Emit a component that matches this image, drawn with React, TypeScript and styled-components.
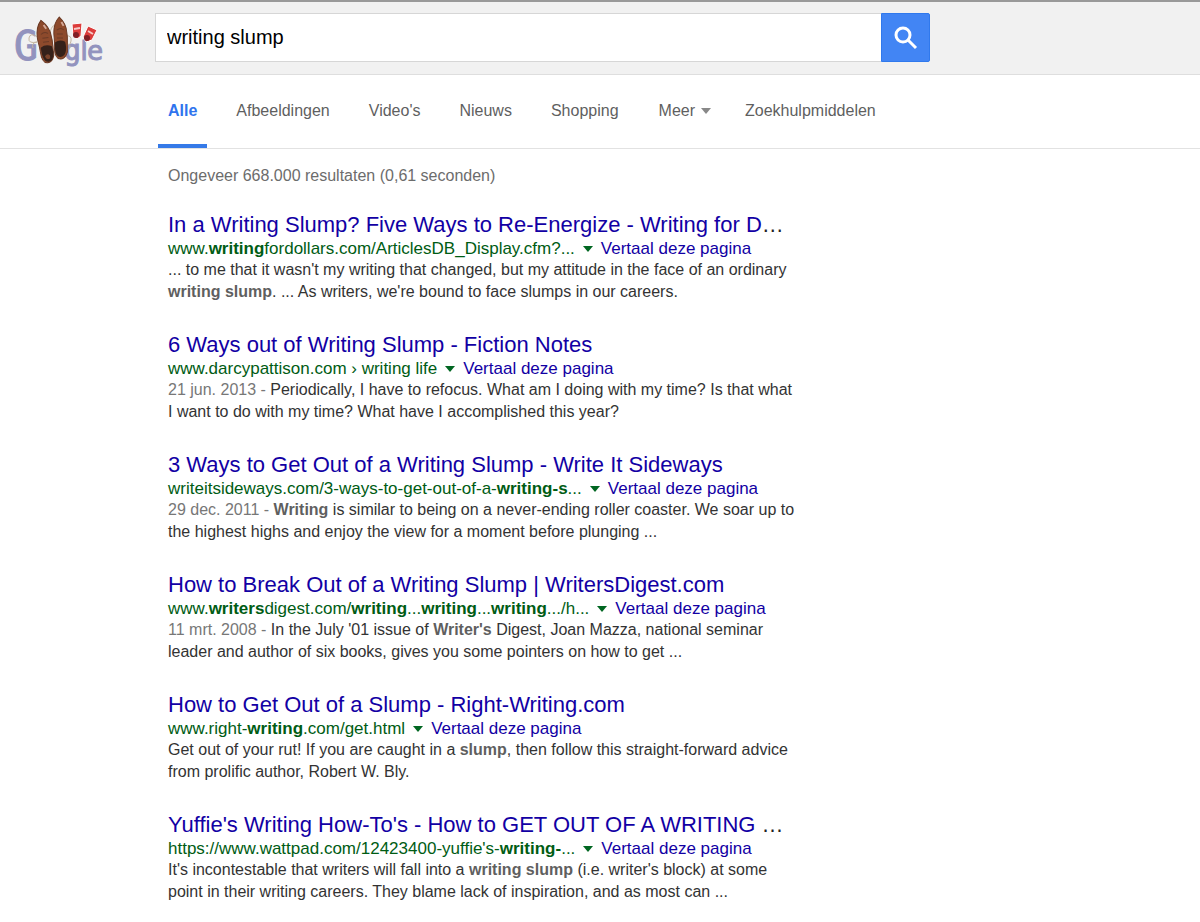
import React from 'react';
import styled, { createGlobalStyle } from 'styled-components';

const GlobalStyle = createGlobalStyle`
  * { box-sizing: border-box; }
  body {
    margin: 0;
    background: #fff;
    color: #333;
    font-family: "Liberation Sans", Arial, sans-serif;
    font-size: 16px;
    line-height: 22px;
  }
  a { text-decoration: none; }
`;

const Header = styled.header`
  display: flex;
  align-items: center;
  height: 75px;
  padding-bottom: 1px;
  background: #f1f1f1;
  border-top: 2px solid #999;
  border-bottom: 1px solid #dedede;
`;

const LogoLink = styled.a`
  flex: none;
  width: 155px;
  padding-left: 14px;
  svg { display: block; }
`;

const SearchForm = styled.form`
  display: flex;
  flex: 0 1 775px;
  height: 49px;
`;

const SearchInput = styled.input`
  flex: 1;
  min-width: 0;
  padding: 0 11px 1px;
  border: 1px solid #d6d6d6;
  border-right: 0;
  border-radius: 0;
  background: #fff;
  color: #000;
  font: 20px "Liberation Sans", Arial, sans-serif;
  outline: none;
`;

const SearchButton = styled.button`
  display: flex;
  align-items: center;
  justify-content: center;
  width: 49px;
  padding: 0;
  border: 1px solid #3079ed;
  border-radius: 0 2px 2px 0;
  background: #4285f4;
`;

const Nav = styled.nav`
  display: flex;
  gap: 20px;
  padding-left: 158px;
  border-bottom: 1px solid #e2e2e2;
`;

const Tab = styled.a<{ $active?: boolean; $menu?: boolean }>`
  display: flex;
  align-items: center;
  gap: 6px;
  height: 73px;
  padding: 0 ${(p) => (p.$menu ? '5px' : '10px')} 0 ${(p) => (p.$menu || p.$active ? '10px' : '9px')};
  border-top: 2px solid transparent;
  border-bottom: 4px solid ${(p) => (p.$active ? '#357ae8' : 'transparent')};
  color: ${(p) => (p.$active ? '#2f74ee' : '#5f5f5f')};
  font-weight: ${(p) => (p.$active ? 700 : 400)};
  white-space: nowrap;
`;

const Caret = styled.span<{ $color: string }>`
  display: inline-block;
  flex: none;
  border: 5px solid transparent;
  border-top: 6px solid ${(p) => p.$color};
  border-bottom: 0;
`;

const Main = styled.main`
  box-sizing: content-box;
  max-width: 630px;
  padding: 16px 0 0 168px;
`;

const Stats = styled.p`
  margin: 0 0 24px;
  color: #6c6c6c;
`;

const Result = styled.article`
  margin-bottom: 28px;
`;

const Title = styled.h3`
  margin: 0;
  overflow: hidden;
  color: #222;
  font-size: 22px;
  font-weight: 400;
  line-height: 27px;
  text-overflow: ellipsis;
  white-space: nowrap;
  a { color: #1200a4; }
`;

const Source = styled.div`
  display: flex;
  align-items: center;
  gap: 8px;
  font-size: 17px;
  line-height: 21px;
  white-space: nowrap;
  cite { color: #005c14; font-style: normal; }
  a { color: #1200a4; }
`;

const Snippet = styled.p`
  margin: 0;
  b { color: #5f5f5f; }
`;

const SnippetDate = styled.span`
  color: #777;
`;

interface ResultData {
  title: string;
  cut?: boolean;
  url: React.ReactNode;
  date?: string;
  lines: [React.ReactNode, React.ReactNode];
}

const results: ResultData[] = [
  {
    title: 'In a Writing Slump? Five Ways to Re-Energize - Writing for D',
    cut: true,
    url: <>www.<b>writing</b>fordollars.com/ArticlesDB_Display.cfm?...</>,
    lines: [
      "... to me that it wasn't my writing that changed, but my attitude in the face of an ordinary",
      <><b>writing slump</b>. ... As writers, we're bound to face slumps in our careers.</>,
    ],
  },
  {
    title: '6 Ways out of Writing Slump - Fiction Notes',
    url: 'www.darcypattison.com › writing life',
    date: '21 jun. 2013 - ',
    lines: [
      'Periodically, I have to refocus. What am I doing with my time? Is that what',
      'I want to do with my time? What have I accomplished this year?',
    ],
  },
  {
    title: '3 Ways to Get Out of a Writing Slump - Write It Sideways',
    url: <>writeitsideways.com/3-ways-to-get-out-of-a-<b>writing-s</b>...</>,
    date: '29 dec. 2011 - ',
    lines: [
      <><b>Writing</b> is similar to being on a never-ending roller coaster. We soar up to</>,
      'the highest highs and enjoy the view for a moment before plunging ...',
    ],
  },
  {
    title: 'How to Break Out of a Writing Slump | WritersDigest.com',
    url: <>www.<b>writers</b>digest.com/<b>writing</b>...<b>writing</b>...<b>writing</b>.../h...</>,
    date: '11 mrt. 2008 - ',
    lines: [
      <>In the July '01 issue of <b>Writer's</b> Digest, Joan Mazza, national seminar</>,
      'leader and author of six books, gives you some pointers on how to get ...',
    ],
  },
  {
    title: 'How to Get Out of a Slump - Right-Writing.com',
    url: <>www.right-<b>writing</b>.com/get.html</>,
    lines: [
      <>Get out of your rut! If you are caught in a <b>slump</b>, then follow this straight-forward advice</>,
      'from prolific author, Robert W. Bly.',
    ],
  },
  {
    title: "Yuffie's Writing How-To's - How to GET OUT OF A WRITING ",
    cut: true,
    url: <>https://www.wattpad.com/12423400-yuffie's-<b>writing-</b>...</>,
    lines: [
      <>It's incontestable that writers will fall into a <b>writing slump</b> (i.e. writer's block) at some</>,
      'point in their writing careers. They blame lack of inspiration, and as most can ...',
    ],
  },
];

const Logo = () => (
  <svg width="90" height="62" viewBox="0 0 90 62" role="img" aria-label="Google">
    <g fill="#9293be" stroke="#9293be" fontFamily='"DejaVu Sans Mono", monospace'>
      <text x="0" y="53" fontSize="40" strokeWidth="1">G</text>
      <text x="50" y="53" fontSize="28" strokeWidth="1">g</text>
      <text x="67" y="53" fontSize="28" strokeWidth="1" fontFamily='"Liberation Sans", sans-serif'>l</text>
      <text x="73" y="53" fontSize="27" strokeWidth="1">e</text>
    </g>
    <g fill="none" stroke="#c4b6a0" strokeWidth="1">
      <path d="M24 30q-8-5-9 1t8 4q-6 1-4 6M36 25q3-9 5-5M51 21q0-4-3-3M52 29q6-1 5 5t-5 2q6 2 3 6" />
    </g>
    <g transform="translate(0 6) rotate(-8 31 29)">
      <path d="M30 7C26 11 24 17 24 24c0 5 1 8 1 14 0 7 2 12 6 12s8-5 7-11c0-6 1-9 0-15C38 17 34 11 30 7Z" fill="#8d4a2c" stroke="#6b3a25" />
      <path d="M26 34q5-3 11 0c2 8 0 15-5 15s-6-7-6-15Z" fill="#35211a" />
      <path d="M29 43q3-3 5 0c1 4-4 5-5 0Z" fill="#7a432b" />
      <path d="M28 21q4-3 7 0M29 25h6M29 29h6" fill="none" stroke="#6b3b27" />
      <path d="M32 12l2 4" stroke="#d4a896" strokeWidth="2" />
    </g>
    <g transform="translate(0 5) rotate(-2 46 26)">
      <path d="M46 5C42 9 40 14 40 21c0 5 1 8 0 14 0 7 2 12 6 12s8-5 7-11c0-6 1-9 0-15C53 14 50 9 46 5Z" fill="#8d4a2c" stroke="#6b3a25" />
      <path d="M41 30q5-3 10 0c2 8 0 15-5 15s-6-7-5-15Z" fill="#35211a" />
      <path d="M43 18q4-3 7 0M43 22h6M43 26h6" fill="none" stroke="#6b3b27" />
      <path d="M48 10l2 4" stroke="#d4a896" strokeWidth="2" />
    </g>
    <g stroke="#fff" strokeWidth="1">
      <path d="M58 17l10-1-1 13-4 3-4-3Z" fill="#dc3c3b" />
      <path d="M74 19l9 4-5 10-6 2-3-5Z" fill="#dc3c3b" />
    </g>
    <path d="M60 22l6-1M74 24l5 3" stroke="#f6c9c6" strokeWidth="2" />
    <circle cx="62" cy="28" r="3" fill="#801f25" />
    <circle cx="73" cy="31" r="3" fill="#801f25" />
  </svg>
);

const SearchIcon = () => (
  <svg width="24" height="24" viewBox="0 0 24 24" fill="none" stroke="#fff" aria-hidden="true">
    <circle cx="9" cy="9" r="7" strokeWidth="3" />
    <path d="M14 14l8 8" strokeWidth="3" />
  </svg>
);

export default function App() {
  return (
    <>
      <GlobalStyle />
      <Header>
        <LogoLink href="#home"><Logo /></LogoLink>
        <SearchForm role="search" onSubmit={(e) => e.preventDefault()}>
          <SearchInput type="text" aria-label="Zoeken" defaultValue="writing slump" />
          <SearchButton type="submit" aria-label="Zoeken"><SearchIcon /></SearchButton>
        </SearchForm>
      </Header>
      <Nav>
        <Tab href="#alle" $active>Alle</Tab>
        <Tab href="#afbeeldingen">Afbeeldingen</Tab>
        <Tab href="#videos">Video's</Tab>
        <Tab href="#nieuws">Nieuws</Tab>
        <Tab href="#shopping">Shopping</Tab>
        <Tab href="#meer" $menu>Meer <Caret $color="#888" /></Tab>
        <Tab href="#hulpmiddelen">Zoekhulpmiddelen</Tab>
      </Nav>
      <Main>
        <Stats>Ongeveer 668.000 resultaten (0,61 seconden)</Stats>
        {results.map((r) => (
          <Result key={r.title}>
            <Title><a href="#resultaat">{r.title}</a>{r.cut && '…'}</Title>
            <Source>
              <cite>{r.url}</cite>
              <Caret $color="#006621" />
              <a href="#vertaal">Vertaal deze pagina</a>
            </Source>
            <Snippet>
              {r.date && <SnippetDate>{r.date}</SnippetDate>}
              {r.lines[0]}
              <br />
              {r.lines[1]}
            </Snippet>
          </Result>
        ))}
      </Main>
    </>
  );
}
